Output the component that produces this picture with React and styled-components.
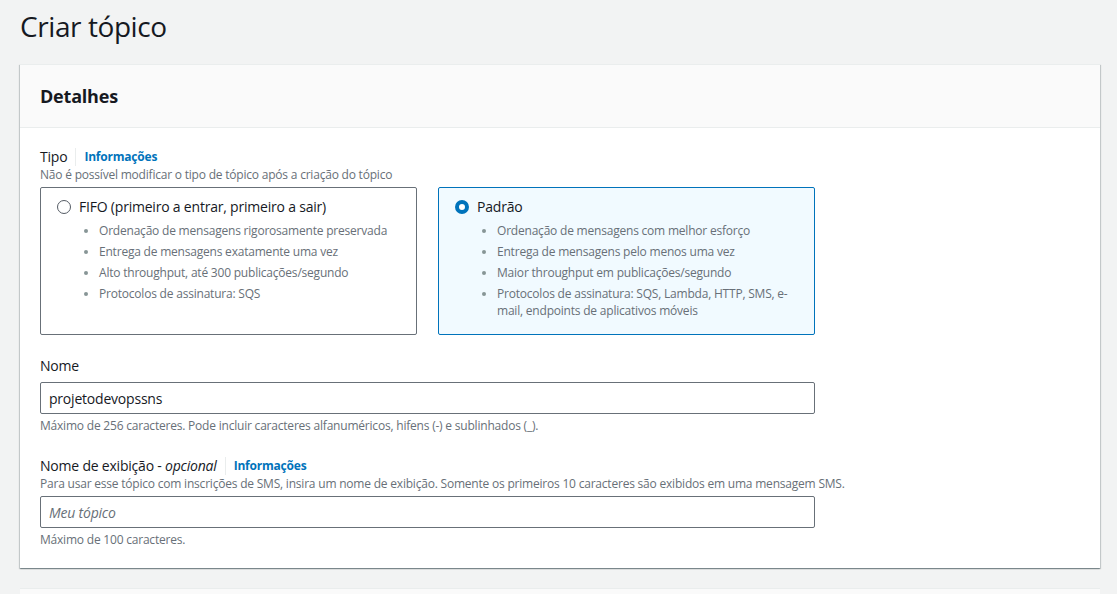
import React from "react";
import styled, { createGlobalStyle } from "styled-components";

const Global = createGlobalStyle`
  html, body { margin: 0; padding: 0; background: #f2f3f3; }
  body { font-family: "Open Sans", "Noto Sans", Arial, sans-serif; color: #16191f; letter-spacing: -0.013em; }
  * { box-sizing: border-box; }
`;

const Page = styled.div`
  padding: 0 17px 0 20px;
  height: 594px;
  overflow: hidden;
`;

const Title = styled.h1`
  margin: 0;
  padding-top: 8px;
  height: 64px;
  font-size: 28px;
  line-height: 36px;
  font-weight: 400;
  letter-spacing: -0.015em;
  color: #16191f;
`;

const Card = styled.section`
  background: #fff;
  box-shadow: 0 1px 1px 0 rgba(0, 28, 36, 0.3), 1px 1px 1px 0 rgba(0, 28, 36, 0.15), -1px 1px 1px 0 rgba(0, 28, 36, 0.15);
  border-top: 1px solid #eaeded;
  margin-bottom: 20px;
`;

const CardHeader = styled.div`
  background: #fafafa;
  border-bottom: 1px solid #eaeded;
  height: 63px;
  padding: 0 20px 1px;
  display: flex;
  align-items: center;
`;

const CardTitle = styled.h2`
  margin: 0;
  font-size: 18px;
  font-weight: 700;
  line-height: 22px;
`;

const CardBody = styled.div`
  padding: 19px 20px 20px;
  display: flex;
  flex-direction: column;
  gap: 22px;
`;

const Field = styled.div`
  display: flex;
  flex-direction: column;
  width: ${(p) => (p.$wide ? "auto" : "775px")};
`;

const LabelRow = styled.div`
  display: flex;
  align-items: center;
  height: 20px;
`;

const Label = styled.span`
  font-size: 14px;
  line-height: 20px;
  color: #16191f;
  em { font-style: italic; }
`;

const InfoLink = styled.a`
  font-size: 12px;
  font-weight: 700;
  color: #0073bb;
  text-decoration: none;
  margin-left: 8px;
  padding-left: 8px;
  border-left: 1px solid #eaeded;
  line-height: 18px;
`;

const Description = styled.div`
  font-size: 12px;
  line-height: 16px;
  color: #687078;
`;

const Hint = styled(Description)`
  margin-top: 4px;
`;

const Tiles = styled.div`
  display: grid;
  grid-template-columns: 377px 377px;
  gap: 21px;
  margin-top: 4px;
  margin-bottom: -1px;
`;

const Tile = styled.label`
  display: block;
  height: 148px;
  border: 1px solid ${(p) => (p.$selected ? "#0073bb" : "#687078")};
  background: ${(p) => (p.$selected ? "#f1faff" : "#fff")};
  border-radius: 2px;
  padding: 9px 20px 10px 16px;
`;

const TileHead = styled.div`
  display: flex;
  align-items: center;
  gap: 8px;
  height: 20px;
`;

const Radio = styled.span`
  width: 14px;
  height: 14px;
  border-radius: 50%;
  flex: none;
  border: ${(p) => (p.$checked ? "4px solid #0073bb" : "1px solid #545b64")};
  background: #fff;
`;

const TileTitle = styled.span`
  font-size: 14px;
  line-height: 20px;
  color: #16191f;
`;

const Bullets = styled.ul`
  margin: 5px 0 0;
  padding-left: 42px;
  list-style: disc;
  li {
    font-size: 12px;
    line-height: 17px;
    color: #687078;
    margin-bottom: 4px;
  }
  li::marker { color: #879596; }
`;

const Input = styled.input`
  margin-top: 6px;
  width: 775px;
  height: 32px;
  border: 1px solid #687078;
  border-radius: 2px;
  padding: 4px 8px;
  font-family: inherit;
  letter-spacing: inherit;
  font-size: 14px;
  color: #16191f;
  background: #fff;
  outline: none;
  &::placeholder { color: #687078; font-style: italic; opacity: 1; }
`;

const DescInput = styled(Input)`
  margin-top: 4px;
`;

const NextCard = styled.div`
  background: #fafafa;
  border-top: 1px solid #eaeded;
  height: 40px;
`;

export default function App() {
  return (
    <>
      <Global />
      <Page>
        <Title>Criar tópico</Title>
        <Card>
          <CardHeader>
            <CardTitle>Detalhes</CardTitle>
          </CardHeader>
          <CardBody>
            <Field $wide>
              <LabelRow>
                <Label>Tipo</Label>
                <InfoLink href="#">Informações</InfoLink>
              </LabelRow>
              <Description>Não é possível modificar o tipo de tópico após a criação do tópico</Description>
              <Tiles>
                <Tile>
                  <TileHead>
                    <Radio />
                    <TileTitle>FIFO (primeiro a entrar, primeiro a sair)</TileTitle>
                  </TileHead>
                  <Bullets>
                    <li>Ordenação de mensagens rigorosamente preservada</li>
                    <li>Entrega de mensagens exatamente uma vez</li>
                    <li>Alto throughput, até 300 publicações/segundo</li>
                    <li>Protocolos de assinatura: SQS</li>
                  </Bullets>
                </Tile>
                <Tile $selected>
                  <TileHead>
                    <Radio $checked />
                    <TileTitle>Padrão</TileTitle>
                  </TileHead>
                  <Bullets>
                    <li>Ordenação de mensagens com melhor esforço</li>
                    <li>Entrega de mensagens pelo menos uma vez</li>
                    <li>Maior throughput em publicações/segundo</li>
                    <li>Protocolos de assinatura: SQS, Lambda, HTTP, SMS, e-mail, endpoints de aplicativos móveis</li>
                  </Bullets>
                </Tile>
              </Tiles>
            </Field>
            <Field>
              <LabelRow>
                <Label>Nome</Label>
              </LabelRow>
              <Input defaultValue="projetodevopssns" />
              <Hint>Máximo de 256 caracteres. Pode incluir caracteres alfanuméricos, hifens (-) e sublinhados (_).</Hint>
            </Field>
            <Field $wide>
              <LabelRow>
                <Label>Nome de exibição - <em>opcional</em></Label>
                <InfoLink href="#">Informações</InfoLink>
              </LabelRow>
              <Description>Para usar esse tópico com inscrições de SMS, insira um nome de exibição. Somente os primeiros 10 caracteres são exibidos em uma mensagem SMS.</Description>
              <DescInput placeholder="Meu tópico" />
              <Hint>Máximo de 100 caracteres.</Hint>
            </Field>
          </CardBody>
        </Card>
        <NextCard />
      </Page>
    </>
  );
}
